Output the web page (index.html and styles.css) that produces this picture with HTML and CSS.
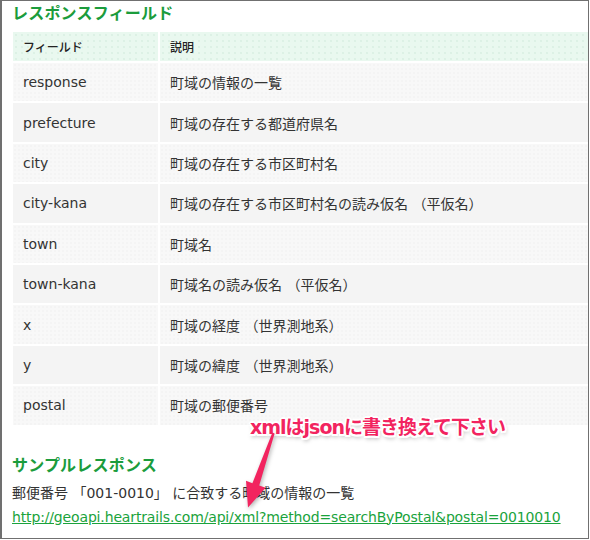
FILE: index.html
```html
<!DOCTYPE html>
<html lang="ja">
<head>
<meta charset="utf-8">
<title>レスポンスフィールド</title>
<link rel="stylesheet" href="styles.css">
</head>
<body>
<div class="frame">
  <h2 class="heading">レスポンスフィールド</h2>
  <div class="fields">
    <div class="cell head">フィールド</div>
    <div class="cell head">説明</div>
    <div class="cell odd">response</div>
    <div class="cell odd">町域の情報の一覧</div>
    <div class="cell even">prefecture</div>
    <div class="cell even">町域の存在する都道府県名</div>
    <div class="cell odd">city</div>
    <div class="cell odd">町域の存在する市区町村名</div>
    <div class="cell even">city-kana</div>
    <div class="cell even">町域の存在する市区町村名の読み仮名 （平仮名）</div>
    <div class="cell odd">town</div>
    <div class="cell odd">町域名</div>
    <div class="cell even">town-kana</div>
    <div class="cell even">町域名の読み仮名 （平仮名）</div>
    <div class="cell odd">x</div>
    <div class="cell odd">町域の経度 （世界測地系）</div>
    <div class="cell even">y</div>
    <div class="cell even">町域の緯度 （世界測地系）</div>
    <div class="cell odd">postal</div>
    <div class="cell odd">町域の郵便番号</div>
  </div>
  <h2 class="heading sample">サンプルレスポンス</h2>
  <p class="desc">郵便番号 「001-0010」 に合致する町域の情報の一覧</p>
  <p class="url"><a href="#">http://geoapi.heartrails.com/api/xml?method=searchByPostal&amp;postal=0010010</a></p>

  <div class="note">xmlはjsonに書き換えて下さい</div>
  <svg class="arrow" width="590" height="540" viewBox="0 0 590 540">
    <polygon points="274.6,433.4 259.2,485.4 265.6,487.8 248,507.5 246,480.8 252.4,483.2 272.4,432.6" fill="#f2245f"/>
  </svg>
</div>
</body>
</html>
```

FILE: styles.css
```css
* { box-sizing: border-box; }
html, body { margin: 0; padding: 0; background: #fff; }
body {
  font-family: "DejaVu Sans", "Noto Sans CJK JP", sans-serif;
  color: #333;
}
.frame {
  position: relative;
  width: 589px;
  height: 539px;
  border-top: 1px solid #707070;
  border-left: 2px solid #707070;
  border-right: 1px solid #707070;
  border-bottom: 1px solid #707070;
  padding: 0 0 0 10px;
  overflow: hidden;
}
.heading {
  margin: 0;
  padding-top: 1px;
  height: 31px;
  font-family: "Noto Sans CJK JP", sans-serif;
  font-size: 16px;
  font-weight: bold;
  line-height: 20px;
  color: #1b9c3c;
  letter-spacing: 0.2px;
}
.fields {
  margin-left: 1px;
  display: grid;
  grid-template-columns: 145px 1fr;
  grid-template-rows: 29px;
  grid-auto-rows: 38.4px;
  gap: 2px;
}
.cell {
  display: flex;
  align-items: center;
  padding-left: 10px;
  font-size: 14px;
  color: #333;
}
.head {
  font-family: "Noto Sans CJK JP", sans-serif;
  font-size: 12px;
  font-weight: 500;
  color: #222;
  background-color: #e9f8ef;
  background-image: radial-gradient(circle, #d6ece0 0.6px, transparent 0.9px);
  background-size: 6px 6px;
}
.odd {
  background-color: #f8f8f8;
  background-image: radial-gradient(circle, #f1f1f1 0.6px, transparent 0.9px);
  background-size: 4px 4px;
}
.even { background-color: #f4f4f4; }
.sample {
  margin-top: 30px;
  padding-top: 0;
  line-height: 18px;
  height: 26px;
}
.desc {
  margin: 0;
  font-size: 14px;
  line-height: 24px;
  color: #333;
}
.url {
  margin: 0;
  font-size: 14px;
  line-height: 24px;
  letter-spacing: -0.15px;
}
.url a { color: #1aa33c; text-decoration: underline; }
.note {
  position: absolute;
  left: 248px;
  top: 414px;
  font-family: "DejaVu Sans", "Noto Sans CJK JP", sans-serif;
  font-size: 19px;
  font-weight: bold;
  line-height: 24px;
  color: #f2245f;
  letter-spacing: -1px;
  text-shadow:
    -1.5px -1.5px 0 #fff, 1.5px -1.5px 0 #fff, -1.5px 1.5px 0 #fff, 1.5px 1.5px 0 #fff,
    0 -2px 0 #fff, 0 2px 0 #fff, -2px 0 0 #fff, 2px 0 0 #fff,
    1px 3px 4px rgba(0,0,0,0.35);
}
.arrow {
  position: absolute;
  left: -2px;
  top: -1px;
  filter: drop-shadow(1px 2px 2px rgba(0,0,0,0.3));
  pointer-events: none;
}
```
